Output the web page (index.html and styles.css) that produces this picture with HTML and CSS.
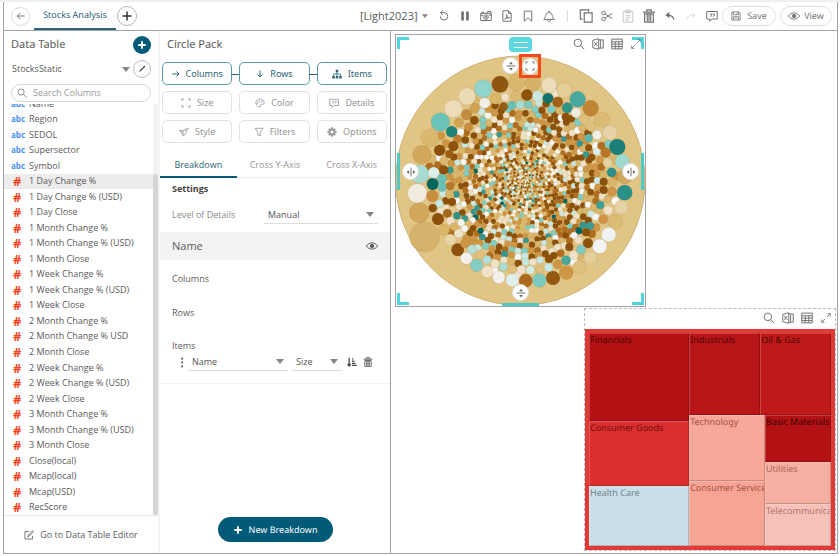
FILE: index.html
```html
<!DOCTYPE html>
<html lang="en">
<head>
<meta charset="utf-8">
<title>Stocks Analysis</title>
<link rel="stylesheet" href="styles.css">
</head>
<body>
<svg class="sprite" aria-hidden="true">
  <symbol id="back" viewBox="0 0 16 16"><path d="M14 8H2M7 3L2 8l5 5"/></symbol>
  <symbol id="plus" viewBox="0 0 16 16"><path d="M8 2v12M2 8h12"/></symbol>
  <symbol id="caret" viewBox="0 0 8 5"><path d="M0 0h8L4 5z" fill="currentColor" stroke="none"/></symbol>
  <symbol id="reload" viewBox="0 0 16 16"><path d="M3 8.500a5 5 0 1 0 5-5H3.500M6.500 0.500l-3 3 3 3"/></symbol>
  <symbol id="pause" viewBox="0 0 16 16"><path d="M3 2h3.500v12H3zM9.500 2H13v12H9.500z" fill="currentColor" stroke="none"/></symbol>
  <symbol id="camera" viewBox="0 0 16 16"><path d="M1 4.500h14V14H1zM1.500 3h4M9 4.500l1-2.500h4.500v2.500M1 7h3.500M11.500 7H15"/><circle cx="8" cy="9.500" r="3"/><circle cx="8" cy="9.500" r="1"/></symbol>
  <symbol id="pdf" viewBox="0 0 16 16"><path d="M2.500 1h7.500l3.500 3.500V15h-11zM10 1v3.500h3.500M5 12.500c2-1 3.500-5 2.700-6.500-1.500 0 0 5 3.800 4.500C9 10 6 11 5 12.500"/></symbol>
  <symbol id="bookmark" viewBox="0 0 16 16"><path d="M3 1.500h10V15l-5-4.500L3 15z"/></symbol>
  <symbol id="bell" viewBox="0 0 16 16"><path d="M1 12.500C4 10.500 3 3 8 3s4 7.500 7 9.500zM8 1v2M6 13c0 3 4 3 4 0"/></symbol>
  <symbol id="copy" viewBox="0 0 16 16"><path d="M6 4.500h9V15H6zM4 11.500H1.500V1H11v2"/></symbol>
  <symbol id="cut" viewBox="0 0 16 16"><circle cx="3.500" cy="4" r="2.300"/><circle cx="3.500" cy="12" r="2.300"/><path d="M5.500 5.200L15 11.500M5.500 10.800L15 4.500"/></symbol>
  <symbol id="paste" viewBox="0 0 16 16"><path d="M2.500 3h11v12h-11zM5.500 1.500h5v3h-5zM5 7.500h6M5 10h6M5 12.500h4"/></symbol>
  <symbol id="trash" viewBox="0 0 16 16"><path d="M1 3.500h14M5.500 3V1h5v2M3 5.500h10V15H3zM6 6v8M8 6v8M10 6v8"/></symbol>
  <symbol id="undo" viewBox="0 0 16 16"><path d="M14 13.500C13.500 8.500 10.500 6.500 3 6.500" stroke-width="2"/><path d="M7 1.500L0.500 6.500 7 11.500z" fill="currentColor" stroke="none"/></symbol>
  <symbol id="redo" viewBox="0 0 16 16"><path d="M2 13.500C2.500 8.500 5.500 6.500 13 6.500M10 2.500l4 4-4 4"/></symbol>
  <symbol id="comment" viewBox="0 0 16 16"><path d="M1 2h14v10H8l-3 3v-3H1zM5 5.500h2.500V7L6 9M9 5.500h2.500V7L10 9"/></symbol>
  <symbol id="save" viewBox="0 0 16 16"><path d="M1.500 1.500H13l1.500 1.500v11.500h-13zM4 1.500v4.500h8V1.500M9.500 2.500v2.500M4 14V9h8v5M6 11.500h4"/></symbol>
  <symbol id="eye" viewBox="0 0 16 16"><path d="M0.500 8C4 2.500 12 2.500 15.500 8 12 13.500 4 13.500 0.500 8z"/><circle cx="8" cy="8" r="2.300" fill="currentColor"/></symbol>
  <symbol id="search" viewBox="0 0 16 16"><circle cx="6.500" cy="6.500" r="5"/><path d="M10.200 10.200L15 15"/></symbol>
  <symbol id="excel" viewBox="0 0 16 16"><path d="M1 3l8-2v14l-8-2zM9 2.500h6v11H9M11.500 3v10M3 5.500l4 5M7 5.500l-4 5"/></symbol>
  <symbol id="table" viewBox="0 0 16 16"><path d="M1 1.500h14v13H1zM1 5h14M1 8.200h14M1 11.400h14M5.700 5v9.500M10.400 5v9.500"/></symbol>
  <symbol id="expand" viewBox="0 0 16 16"><path d="M9.500 6.500l5-5M10.500 1H15v4.500M6.500 9.500l-5 5M1 10.500V15h4.500"/></symbol>
  <symbol id="corners" viewBox="0 0 16 16"><path d="M1.500 5V1.500H5M11 1.500h3.500V5M14.500 11v3.500H11M5 14.500H1.500V11"/></symbol>
  <symbol id="pencil" viewBox="0 0 16 16"><path d="M2 14l2-3.500 9-9 1.700 1.700-9 9z" fill="currentColor" stroke="none"/></symbol>
  <symbol id="right" viewBox="0 0 16 16"><path d="M1 8h13M9 3l5 5-5 5" stroke-width="2"/></symbol>
  <symbol id="down" viewBox="0 0 16 16"><path d="M8 1v13M3 9l5 5 5-5" stroke-width="2"/></symbol>
  <symbol id="tree" viewBox="0 0 16 16"><path d="M8 4v8M2.500 12V8h11v4"/><path d="M6 1h4v4H6zM0.500 11h4v4h-4zM6 11h4v4H6zM11.500 11h4v4h-4z" fill="currentColor" stroke="none"/></symbol>
  <symbol id="palette" viewBox="0 0 16 16"><path d="M7 14.500C-1 13 0 1.500 8 1.500c5 0 8 5 6 8-1.500 1.500-4-0.500-5 1 -0.500 1.500 0.500 4-2 4z"/><circle cx="4.500" cy="8" r="0.700"/><circle cx="7" cy="5" r="0.700"/><circle cx="11" cy="5.500" r="0.700"/></symbol>
  <symbol id="brush" viewBox="0 0 16 16"><path d="M1 5l5 1 3-2 3 4-2 3-3 3.500zM3.500 5.500l5 7M9.500 4.500l4.500-3 1 1.500-3.500 4M5 9l3-2"/></symbol>
  <symbol id="filter" viewBox="0 0 16 16"><path d="M1.500 2h13L10 8v6l-4-1.500V8z"/></symbol>
  <symbol id="gear" viewBox="0 0 16 16"><circle cx="8" cy="8" r="4" stroke-width="3"/><path d="M8 0.500v3M8 12.500v3M0.500 8h3M12.500 8h3M2.700 2.700l2 2M11.300 11.300l2 2M13.300 2.700l-2 2M4.700 11.300l-2 2" stroke-width="2.500"/></symbol>
  <symbol id="sort" viewBox="0 0 16 16"><path d="M3.500 1v13M1 11l2.500 3.500L6 11M8 3h2M8 6.500h4M8 10h5.500M8 13.500h7.500" stroke-width="2"/></symbol>
  <symbol id="dots" viewBox="0 0 4 16"><path d="M1 1h2.500v2.500H1zM1 6.700h2.500v2.500H1zM1 12.400h2.500v2.500H1z" fill="currentColor" stroke="none"/></symbol>
  <symbol id="compose" viewBox="0 0 16 16"><path d="M8 2.500H1.500v12h12V9M6 11l1-3 7-7 1.500 1.500-7 7z"/></symbol>
  <symbol id="split" viewBox="0 0 16 16"><path d="M1 8h14" stroke-width="1.500"/><path d="M8 1l3 4H5zM8 15l3-4H5z" fill="currentColor" stroke="none"/></symbol>
</svg>

<div class="app">
  <header class="topbar">
    <button class="round" aria-label="Back"><svg class="i10"><use href="#back"/></svg></button>
    <a class="page-tab" href="#analysis">Stocks Analysis</a>
    <button class="round dark" aria-label="Add page"><svg class="i12 plus"><use href="#plus"/></svg></button>
    <span class="grow"></span>
    <label class="drop theme"><select aria-label="Theme"><option>[Light2023]</option></select><svg class="caret"><use href="#caret"/></svg></label>
    <div class="tools">
      <button aria-label="Reset"><svg class="i12"><use href="#reload"/></svg></button>
      <button aria-label="Pause"><svg class="i12"><use href="#pause"/></svg></button>
      <button aria-label="Snapshot"><svg class="i12"><use href="#camera"/></svg></button>
      <button aria-label="Export PDF"><svg class="i12"><use href="#pdf"/></svg></button>
      <button aria-label="Bookmark"><svg class="i12"><use href="#bookmark"/></svg></button>
      <button aria-label="Alerts"><svg class="i12"><use href="#bell"/></svg></button>
    </div>
    <span class="divider"></span>
    <div class="tools">
      <button aria-label="Copy"><svg class="i14"><use href="#copy"/></svg></button>
      <button aria-label="Cut"><svg class="i12"><use href="#cut"/></svg></button>
      <button class="off" aria-label="Paste"><svg class="i14"><use href="#paste"/></svg></button>
      <button aria-label="Delete"><svg class="i14"><use href="#trash"/></svg></button>
      <button aria-label="Undo"><svg class="i10"><use href="#undo"/></svg></button>
      <button class="off" aria-label="Redo"><svg class="i10"><use href="#redo"/></svg></button>
      <button aria-label="Comment"><svg class="i12"><use href="#comment"/></svg></button>
    </div>
    <button class="pill"><svg class="i10"><use href="#save"/></svg>Save</button>
    <button class="pill view"><svg class="i12"><use href="#eye"/></svg>View</button>
  </header>

  <div class="body">
    <aside class="data">
      <div class="data-head"><h2>Data Table</h2><button class="add" aria-label="Add data table"><svg class="i10 bold"><use href="#plus"/></svg></button></div>
      <div class="source">
        <label class="drop"><select aria-label="Data source"><option>StocksStatic</option></select><svg class="caret"><use href="#caret"/></svg></label>
        <button class="round small" aria-label="Edit"><svg class="i8"><use href="#pencil"/></svg></button>
      </div>
      <label class="search"><svg class="i10"><use href="#search"/></svg><input type="text" placeholder="Search Columns" aria-label="Search Columns"></label>
      <div class="list">
        <ul id="columns">
          <li class="text">Name</li>
          <li class="text">Region</li>
          <li class="text">SEDOL</li>
          <li class="text">Supersector</li>
          <li class="text">Symbol</li>
          <li class="active">1 Day Change %</li>
          <li>1 Day Change % (USD)</li>
          <li>1 Day Close</li>
          <li>1 Month Change %</li>
          <li>1 Month Change % (USD)</li>
          <li>1 Month Close</li>
          <li>1 Week Change %</li>
          <li>1 Week Change % (USD)</li>
          <li>1 Week Close</li>
          <li>2 Month Change %</li>
          <li>2 Month Change % USD</li>
          <li>2 Month Close</li>
          <li>2 Week Change %</li>
          <li>2 Week Change % (USD)</li>
          <li>2 Week Close</li>
          <li>3 Month Change %</li>
          <li>3 Month Change % (USD)</li>
          <li>3 Month Close</li>
          <li>Close(local)</li>
          <li>Mcap(local)</li>
          <li>Mcap(USD)</li>
          <li>RecScore</li>
        </ul>
        <div class="track"><div class="thumb"></div></div>
      </div>
      <a class="editor" href="#editor"><svg class="i10"><use href="#compose"/></svg>Go to Data Table Editor</a>
    </aside>

    <section class="config">
      <h2>Circle Pack</h2>
      <div class="shelf">
        <button class="on link"><svg class="i8"><use href="#right"/></svg>Columns</button>
        <button class="on link"><svg class="i8"><use href="#down"/></svg>Rows</button>
        <button class="on"><svg class="i10"><use href="#tree"/></svg>Items</button>
        <button><svg class="i10"><use href="#corners"/></svg>Size</button>
        <button><svg class="i10"><use href="#palette"/></svg>Color</button>
        <button><svg class="i10"><use href="#comment"/></svg>Details</button>
        <button><svg class="i10"><use href="#brush"/></svg>Style</button>
        <button><svg class="i10"><use href="#filter"/></svg>Filters</button>
        <button><svg class="i10"><use href="#gear"/></svg>Options</button>
      </div>
      <nav class="tabs"><a class="current" href="#b">Breakdown</a><a href="#y">Cross Y-Axis</a><a href="#x">Cross X-Axis</a></nav>
      <h3>Settings</h3>
      <div class="level"><label for="lod">Level of Details</label>
        <span class="drop line"><select id="lod"><option>Manual</option></select><svg class="caret"><use href="#caret"/></svg></span></div>
      <div class="band"><span>Name</span><button aria-label="Visible"><svg class="i12"><use href="#eye"/></svg></button></div>
      <div class="slots">
        <p>Columns</p><p>Rows</p><p>Items</p>
        <div class="item">
          <svg class="grip"><use href="#dots"/></svg>
          <label class="drop line wide"><select aria-label="Item column"><option>Name</option></select><svg class="caret"><use href="#caret"/></svg></label>
          <label class="drop line short"><select aria-label="Sort by"><option>Size</option></select><svg class="caret"><use href="#caret"/></svg></label>
          <button aria-label="Sort order"><svg class="i10"><use href="#sort"/></svg></button>
          <button aria-label="Remove"><svg class="i10"><use href="#trash"/></svg></button>
        </div>
      </div>
      <button class="new"><svg class="i10 bold"><use href="#plus"/></svg>New Breakdown</button>
    </section>

    <main class="canvas">
      <section class="widget tree" aria-label="Treemap">
        <div class="actions">
          <button aria-label="Search"><svg class="i12"><use href="#search"/></svg></button>
          <button aria-label="Excel"><svg class="i12"><use href="#excel"/></svg></button>
          <button aria-label="Table"><svg class="i12"><use href="#table"/></svg></button>
          <button aria-label="Expand"><svg class="i10"><use href="#expand"/></svg></button>
        </div>
        <div class="map">
          <div class="col left">
            <div class="cell fin">Financials</div>
            <div class="cell goods">Consumer Goods</div>
            <div class="cell health">Health Care</div>
          </div>
          <div class="col rest">
            <div class="row upper"><div class="cell ind">Industrials</div><div class="cell oil">Oil &amp; Gas</div></div>
            <div class="row lower">
              <div class="col mid"><div class="cell tech">Technology</div><div class="cell serv">Consumer Services</div></div>
              <div class="col end"><div class="cell mat">Basic Materials</div><div class="cell util">Utilities</div><div class="cell tele">Telecommunications</div></div>
            </div>
          </div>
        </div>
      </section>
      <section class="widget pack" aria-label="Circle pack">
        <svg id="bubbles" class="bubbles" viewBox="18 15 747 813"><circle class="base" cx="391" cy="452" r="374"/></svg>
        <i class="corner tl"></i><i class="corner tr"></i><i class="corner bl"></i><i class="corner br"></i>
        <i class="edge l"></i><i class="edge r"></i><i class="edge b"></i>
        <div class="actions">
          <button aria-label="Search"><svg class="i12"><use href="#search"/></svg></button>
          <button aria-label="Excel"><svg class="i12"><use href="#excel"/></svg></button>
          <button aria-label="Table"><svg class="i12"><use href="#table"/></svg></button>
          <button aria-label="Expand"><svg class="i10"><use href="#expand"/></svg></button>
        </div>
        <button class="mover" aria-label="Move"></button>
        <button class="handle h-top" aria-label="Split top"><svg class="i10"><use href="#split"/></svg></button>
        <button class="handle h-bottom" aria-label="Split bottom"><svg class="i10"><use href="#split"/></svg></button>
        <button class="handle h-left" aria-label="Split left"><svg class="i10 turn"><use href="#split"/></svg></button>
        <button class="handle h-right" aria-label="Split right"><svg class="i10 turn"><use href="#split"/></svg></button>
        <div class="focus"><button class="handle" aria-label="Fill"><svg class="i10"><use href="#corners"/></svg></button></div>
      </section>
    </main>
  </div>
</div>
<script src="app.js"></script>
</body>
</html>
```
FILE: styles.css
```css
*, *::before, *::after { box-sizing: border-box; }
body { margin: 0; height: 100vh; font: 9px/14px "Open Sans", "Noto Sans", sans-serif; color: #5a5a5a; background: #fff; border-top: 2px solid #f0f0f0; padding: 0 2px 2px 3px; }
button, select, input { font: inherit; color: inherit; background: none; border: 0; padding: 0; margin: 0; }
button { display: inline-flex; align-items: center; justify-content: center; }
select { appearance: none; width: 100%; outline: 0; }
a { color: inherit; text-decoration: none; }
h2, h3, p, ul { margin: 0; padding: 0; }
h2 { font-size: 11px; line-height: 18px; font-weight: 400; }
svg { fill: none; stroke: currentColor; stroke-width: 1.300; flex: none; }
.sprite { display: none; }
.i8 { width: 8px; height: 8px; }
.i10 { width: 10px; height: 10px; }
.i12 { width: 12px; height: 12px; }
.i14 { width: 14px; height: 14px; }
.bold { stroke-width: 3; }
.plus { stroke-width: 2; }
.grow { flex: 1; }
.caret { width: 8px; height: 5px; color: #858585; }
.page-tab, .pill, .shelf, .new, .map, h2 { font-family: "Noto Sans", sans-serif; text-rendering: geometricPrecision; }

.app { height: 100%; display: flex; flex-direction: column; border: 1px solid #a2a2a2; border-top: 0; }
.topbar { height: 29px; flex: none; display: flex; align-items: center; border-bottom: 1px solid #a2a2a2; padding: 0 5px 0 7px; }
.round { width: 19px; height: 19px; border: 1px solid #dcdcdc; border-radius: 50%; background: #fff; }
.round.dark { border-color: #b5b5b5; width: 20px; height: 20px; color: #333; }
.page-tab { align-self: stretch; display: flex; align-items: center; justify-content: center; width: 82px; margin: 0 1px 0 4px; font-size: 9px; color: #2c6478; border-bottom: 2px solid #2c6478; }
.drop { display: flex; align-items: center; }
.theme { font-size: 11px; width: 68px; margin-right: 5px; }
.theme .caret { width: 6px; height: 4px; }
.tools { display: flex; }
.tools button { width: 21px; height: 20px; color: #707070; }
.tools .off { color: #d0d0d0; }
.divider { width: 1px; height: 12px; background: #ddd; margin: 0 7px 0 8px; }
.pill { height: 20px; width: 54px; border: 1px solid #dedede; border-radius: 10px; gap: 6px; font-size: 9px; color: #777; }
.view { width: 52px; margin-left: 4px; gap: 4px; }

.body { flex: 1; min-height: 0; display: grid; grid-template-columns: 156px 231px 1fr; }
.data { display: flex; flex-direction: column; min-height: 0; border-right: 2px solid #f4f4f4; }
.data-head { display: flex; justify-content: space-between; align-items: center; padding: 5px 7px 0 7px; }
.add { width: 18px; height: 18px; border-radius: 50%; background: #005a78; color: #fff; }
.source { display: flex; align-items: center; justify-content: space-between; gap: 3px; padding: 6px 7px 0 8px; }
.source .drop { flex: 1; }
.small { width: 18px; height: 18px; border-color: #bbb; color: #333; }
.search { height: 18px; margin: 6px 7px 2px 7px; border: 1px solid #d8d8d8; border-radius: 9px; display: flex; align-items: center; gap: 6px; padding: 0 5px; color: #777; }
.search input { min-width: 0; flex: 1; outline: 0; }
.search input::placeholder { color: #999; opacity: 1; }
.list { flex: 1; min-height: 0; overflow: hidden; display: flex; border-bottom: 1px solid #e8e8e8; }
.list ul { flex: 1; margin-top: -8px; list-style: none; display: flex; flex-direction: column; }
.list li { flex: 1; display: flex; align-items: center; padding-left: 7px; white-space: nowrap; }
.list li::before { content: "#"; font: 700 13px/12px "Noto Sans"; color: #f8421c; width: 18px; padding-left: 2px; flex: none; }
.list li.text::before { content: "abc"; font: 700 8px/12px "Open Sans"; color: #4a90f5; padding-left: 0; }
.list .active { background: #ececec; }
.track { width: 5px; background: #f3f3f3; display: flex; align-items: flex-end; }
.thumb { width: 5px; height: 83%; border-radius: 3px; background: #d4d4d4; }
.editor { height: 37px; display: flex; align-items: center; justify-content: center; gap: 6px; }

.config { display: flex; flex-direction: column; border-right: 1px solid #a2a2a2; }
.config h2 { margin: 5px 0 8px 7px; }
.shelf { display: grid; grid-template-columns: repeat(3, 1fr); gap: 6px 7px; padding: 0 3px 0 2px; }
.shelf button { height: 23px; border: 1px solid #e2e2e2; border-radius: 5px; gap: 6px; font-size: 9px; color: #959595; position: relative; }
.shelf .on { border-color: #5a9aad; color: #2c6478; }
.link::after { content: ""; position: absolute; left: 100%; top: 50%; width: 8px; height: 1px; background: #2c6478; }
.tabs { display: grid; grid-template-columns: repeat(3, 1fr); text-align: center; margin-top: 11px; color: #959595; border-bottom: 1px solid #eee; }
.tabs a { padding: 3px 0; line-height: 16px; margin-bottom: -1px; border-bottom: 2px solid transparent; }
.tabs .current { color: #2c6478; border-color: #005a78; }
h3 { font-size: 9px; line-height: 14px; margin: 4px 12px 10px; color: #444; }
.level { display: flex; align-items: center; justify-content: space-between; padding: 0 12px; color: #8a8a8a; }
.line { border-bottom: 1px solid #ddd; padding: 0 4px; height: 18px; color: #555; }
.level .line { width: 114px; }
.band { display: flex; justify-content: space-between; align-items: center; height: 28px; margin-top: 8px; padding: 0 12px; background: #f3f3f3; font-size: 11px; }
.slots { padding: 11px 12px 12px; border-bottom: 1px solid #f1f1f1; }
.slots p { line-height: 16px; margin-bottom: 18px; }
.slots p:nth-of-type(3) { line-height: 14px; margin-bottom: 0; }
.item { display: flex; align-items: center; gap: 4px; color: #444; margin-left: 8px; }
.grip { width: 4px; height: 11px; }
.item button { width: 12px; }
.wide { width: 100px; }
.short { width: 50px; }
.new { margin: auto auto 11px; width: 115px; height: 25px; border-radius: 13px; background: #005a78; color: #fff; gap: 6px; font-size: 9px; }

.canvas { position: relative; min-width: 0; }
.widget { position: absolute; }
.actions { display: flex; justify-content: flex-end; }
.actions button { width: 19px; height: 18px; color: #707070; }
.pack { left: 4px; top: 3px; width: 251px; height: 273px; background: #fff; border: 1px solid #a2a2a2; }
.pack .actions { position: relative; }
.bubbles { position: absolute; left: 0; top: 0; width: 100%; height: 100%; stroke: none; }
.base { fill: #e0c584; stroke: #ceb277; stroke-width: 3; }
.corner { position: absolute; width: 12px; height: 12px; border: 0 solid #4fd5de; }
.tl { left: 1px; top: 2px; border-width: 3px 0 0 3px; }
.tr { right: 1px; top: 2px; border-width: 3px 3px 0 0; }
.bl { left: 1px; bottom: 1px; border-width: 0 0 3px 3px; }
.br { right: 1px; bottom: 1px; border-width: 0 3px 3px 0; }
.edge { position: absolute; background: #4fc9c6; }
.edge.l, .edge.r { top: 118px; width: 3px; height: 37px; }
.edge.l { left: 1px; }
.edge.r { right: 1px; }
.edge.b { left: 106px; bottom: 0; width: 37px; height: 3px; }
.mover { position: absolute; left: 113px; top: 2px; width: 23px; height: 15px; border-radius: 4px; background: #5cd9e0; }
.mover::before { content: ""; width: 14px; height: 6px; border: 1px solid #fff; border-width: 1px 0; }
.handle { width: 17px; height: 17px; border-radius: 50%; background: #fff; color: #666; border: 1px solid #ddd; }
.widget > .handle { position: absolute; }
.h-top { left: 106px; top: 22px; }
.h-bottom { left: 116px; bottom: 5px; }
.h-left { left: 6px; top: 128px; }
.h-right { right: 6px; top: 128px; }
.turn { transform: rotate(90deg); }
.focus { position: absolute; left: 123px; top: 19px; width: 22px; height: 24px; border: 3px solid #f4481e; display: flex; align-items: center; justify-content: center; }

.tree { right: 1px; bottom: 2px; width: 252px; height: 243px; border: 1px dashed #bbb; display: flex; flex-direction: column; }
.tree .actions { height: 20px; flex: none; }
.map { flex: 1; min-height: 0; display: flex; background: #e33a38; padding: 4px; font-size: 9px; }
.col { display: flex; flex-direction: column; min-width: 0; min-height: 0; }
.row { display: flex; min-height: 0; min-width: 0; }
.cell { min-width: 0; min-height: 0; overflow: hidden; white-space: nowrap; line-height: 11px; border: 1px solid; border-color: #ffffff30 #0000002e #0000002e #ffffff30; }
.left { flex: 300 0 0; }
.rest { flex: 425 0 0; }
.upper { flex: 246 0 0; }
.lower { flex: 393 0 0; }
.mid { flex: 227 0 0; }
.end { flex: 198 0 0; }
.fin { flex: 266 0 0; background: #b31214; color: #4d0505; }
.goods { flex: 195 0 0; background: #db2e2f; color: #6d0d0d; }
.health { flex: 178 0 0; background: #cbdfe8; color: #71868f; }
.ind { flex: 213 0 0; background: #b81518; color: #510506; }
.oil { flex: 212 0 0; background: #bf1a1a; color: #510506; }
.tech { flex: 197 0 0; background: #f7a898; color: #a84f45; }
.serv { flex: 196 0 0; background: #f6a595; color: #a84f45; }
.mat { flex: 140 0 0; background: #b31214; color: #3d0303; }
.util { flex: 126 0 0; background: #f7afa1; color: #b0645a; }
.tele { flex: 127 0 0; background: #f6c1b9; color: #b0756d; }
```
FILE: app.js
```javascript
// Outer bubbles: x, y, radius, colour.
const outer = `104,621,45,d6b36c 88,548,30,d2a75c 82,490,29,f2ece0 89,432,28,a8dbd2 96,374,28,d2a75c
120,323,27,dab870 151,276,28,6bc4ba 190,236,27,ecdcba 231,199,26,ebdab4 280,176,27,90d4cc 330,163,25,8f5610
380,157,25,d9b76c 429,160,23,d5b066 477,165,23,ecdcba 523,181,23,e5cd98 563,208,24,48a89e 602,235,24,bf8534
636,269,23,dcbb74 660,308,22,e6d4a8 682,351,24,1a8077 697,395,22,a0d9d0 704,440,22,d0a75c 704,488,23,2a9088
694,532,21,e6d3a4 676,575,22,dcbb74 656,614,22,f0f3f2 629,649,22,f3f3f1 602,683,20,e2cf9a 569,711,20,dfc07c
529,728,21,cf9745 489,744,21,94590f 448,751,21,7ccac0 407,752,20,ad6a1c 367,750,20,e0efea 326,742,19,f3f1ec
292,725,18,efe2c8 260,706,19,85cec4 229,685,18,f3f0ec 203,659,19,8c510a 181,629,17,e8d5a8 162,599,17,dab668
144,567,18,8c510a 127,498,18,c88d3e 128,462,18,01665e 131,428,17,dceeea 149,361,17,8c510a 185,305,17,1e857c
284,219,16,f2f0ea 317,206,17,dab668 378,198,16,dcbb74 411,195,17,8c510a 443,198,16,c9e8e2 474,205,16,0f7369
503,216,16,a0621a 532,233,16,2f9389 558,248,15,f0ebe0 582,268,15,dfc07c 604,291,14,dfc07c 621,315,14,f1efe8
341,230,13,945c14 366,226,13,6bc0b6 391,224,13,a8dbd2 415,224,12,7ccac0 207,278,14,d3a354 230,254,16,c28c40
254,235,15,d3a354 253,271,13,8c510a 236,291,13,c88d3e 203,327,13,bf7f30 190,349,15,8c510a 226,330,11,8c510a
178,372,12,9c5e14 162,392,13,d9b76c 161,420,14,8c510a 156,446,14,6bc0b6 157,471,14,6bc0b6 180,468,12,b87728
179,494,13,dab668 186,516,12,8c510a 187,541,11,e6cd98 172,550,13,a5671c 201,557,11,2f9389 182,573,13,efe2c8
272,602,9,01665e 665,427,14,2a9088 653,399,14,e6d3a4 667,457,13,dab668 666,485,14,cf9745 641,455,12,8c510a
641,480,12,8c510a 631,525,12,3fa096 654,541,14,efe2c8 647,368,15,b87728 605,382,11,8c510a 620,365,11,dceeea
600,588,12,3a9c92 588,607,12,8c510a 594,640,15,8c510a 573,659,14,7ccac0 551,676,14,efe2c8 528,691,14,48a89e
503,703,14,cf9745 476,712,13,c9e8e2 449,718,13,dfc07c 421,720,13,d5ece6 394,719,13,efe2c8 367,718,13,dfc07c
340,711,13,a8dbd2 315,701,13,efe2c8 291,689,13,b5dfd6 268,675,14,dfc07c 246,658,14,b5dfd6 225,640,14,cf9745
640,568,14,cf9745 596,324,12,5cb8ae 477,687,12,8c510a 538,651,12,8c510a 527,260,12,8c510a 484,238,12,7ccac0
206,610,14,efe2c8 192,590,12,dab668`.split(/\s+/).map(s => { const p = s.split(','); return { x: +p[0], y: +p[1], r: +p[2], c: '#' + p[3] }; });

let seed = 20231;
const rand = () => (seed = (seed * 16807) % 2147483647) / 2147483647;
const shades = [['#8c510a', 23], ['#b06d1e', 10], ['#cf9745', 15], ['#d9b76c', 16], ['#efe2c8', 12],
  ['#f7f6f3', 9], ['#c9e8e2', 7], ['#80cdc1', 7], ['#35978f', 3], ['#01665e', 1]];
const total = shades.reduce((n, s) => n + s[1], 0);
const shade = () => { let n = rand() * total; for (const s of shades) { if ((n -= s[1]) < 0) return s[0]; } return shades[0][0]; };

// Concentric rings whose bubbles grow with the distance from the centre.
const inner = [];
let turn = 0;
for (let R = 2; R < 300;) {
  const r = 2.4 + R * 0.036;
  const count = Math.max(3, Math.floor(2 * Math.PI * R / (1.96 * r)));
  turn += Math.PI / count + rand() * 0.02;
  for (let i = 0; i < count; i++) {
    const a = turn + i * 2 * Math.PI / count;
    const d = R + (rand() - 0.5) * r * 0.6;
    const k = R / 282;
    const x = 406 - 8 * k + d * Math.cos(a), y = 458 - 2 * k + d * Math.sin(a);
    if (outer.every(o => Math.hypot(o.x - x, o.y - y) > o.r + r - 10)) inner.push({ x, y, r, c: shade() });
  }
  R += r * 1.72;
}
const svg = document.getElementById('bubbles');
for (const b of inner.concat(outer)) {
  const el = document.createElementNS('http://www.w3.org/2000/svg', 'circle');
  el.setAttribute('cx', b.x.toFixed(1));
  el.setAttribute('cy', b.y.toFixed(1));
  el.setAttribute('r', b.r.toFixed(1));
  el.setAttribute('fill', b.c);
  el.setAttribute('stroke', 'rgba(90,60,10,0.14)');
  el.setAttribute('stroke-width', b.r > 8 ? 2 : 0.5);
  svg.appendChild(el);
}
```
